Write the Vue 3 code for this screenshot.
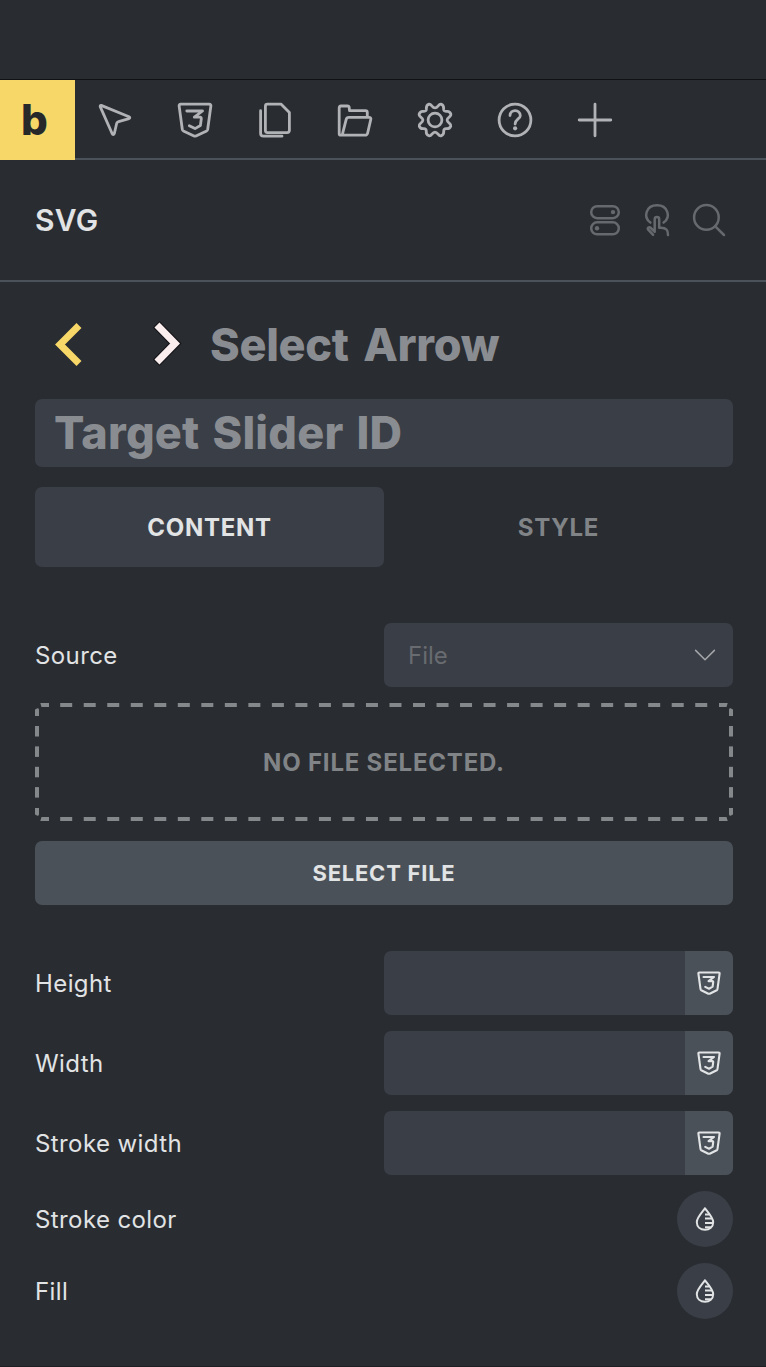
<script setup>
import { ref } from 'vue'

const sizes = ['Height', 'Width', 'Stroke width']
const colors = ['Stroke color', 'Fill']
const tab = ref('Content')
// left edges of the vertical / horizontal dashes around the drop area
const dashX = Array.from({ length: 28 }, (_, i) => 25.2 + i * 23.52)
const dashY = [23, 43.4, 63.8, 84.1]
</script>

<template>
  <div class="panel">
    <div class="topbar"></div>
    <nav class="toolbar">
      <a class="logo"><span>b</span></a>
      <ul class="tools">
        <li>
          <svg viewBox="0 0 36 36"><path d="M4.2 3.4 L32 14.8 Q33.6 15.8 32 16.6 L21.6 19.6 Q20.2 20 19.7 21.3 L17.4 31.3 Q16.2 33.8 15 31.3 L3.2 4.6 Q3 3.2 4.2 3.4Z" /></svg>
        </li>
        <li>
          <svg viewBox="0 0 36 36"><path d="M3.6 2.2H32.4Q34 2.2 33.9 3.8L30.7 27.2Q30.5 28.3 29.6 28.9L19 34Q18 34.4 17 34L6.4 28.9Q5.5 28.3 5.3 27.2L2.1 3.8Q2 2.2 3.6 2.2Z" /><path d="M9.8 9H25.5L17.3 15.2H23Q24.5 15.3 24.3 16.8L23.4 23.5L18 26.6L12.3 23.8" /></svg>
        </li>
        <li>
          <svg viewBox="0 0 36 36"><path d="M10.4 2.2H24.2L32.4 10.5V28.3Q32.4 30.6 30 30.6H10.4Q8.4 30.6 8.4 28.6V4.2Q8.4 2.2 10.4 2.2ZM3.6 8.7V31.2Q3.6 34.2 6.5 34.2H25" /></svg>
        </li>
        <li>
          <svg viewBox="0 0 36 36"><path d="M5.2 33.2H4Q2.2 33.2 2.2 31.4V6Q2.2 4 4 4H10.5Q12 4 12.2 5.4L12.5 8.6H28.5Q30.3 8.6 30.3 10.4V15.4M5.2 33.2L9.2 17.4Q9.7 15.4 11.8 15.4H32Q34.3 15.4 33.8 17.4L30.6 31.2Q30.1 33.2 28 33.2Z" /></svg>
        </li>
        <li>
          <svg viewBox="0 0 36 36"><circle cx="18" cy="18" r="6.9" /><path d="M18 5.9C21 5.9 21.5 1.7 24 2.2C27.5 3.1 26.5 6 26.7 8C27 9.2 27.5 9.4 29 9.4C31 9.4 32.6 8.5 33.8 12C34.7 14.8 30.1 15 30.1 18C30.1 21 34.7 21.4 33.8 24C32.8 27.2 31 26.7 29 26.6C27.3 26.6 26.8 27.3 26.7 29C26.7 31 27.4 32.7 24 33.8C21.4 34.7 21 30.1 18 30.1C15 30.1 14.6 34.7 12 33.8C8.6 32.7 9.3 31 9.3 29C9.2 27.3 8.7 26.6 7 26.6C5 26.7 3.2 27.2 2.2 24C1.3 21.4 5.9 21 5.9 18C5.9 15 1.3 14.8 2.2 12C3.4 8.5 5 9.4 7 9.4C8.5 9.4 9 9.2 9.3 8C9.5 6 8.5 3.1 12 2.2C14.5 1.7 15 5.9 18 5.9Z" /></svg>
        </li>
        <li>
          <svg viewBox="0 0 36 36"><circle cx="18" cy="18" r="15.9" /><path d="M13 13.6C13 6.7 23.5 7.1 23.3 13.7C23.2 16.8 18.1 17.4 18.1 22" /><circle class="dot" cx="18.1" cy="26.3" r="2.1" /></svg>
        </li>
        <li>
          <svg viewBox="0 0 36 36"><path d="M18 2.2V33.8M2.2 18H33.8" /></svg>
        </li>
      </ul>
    </nav>

    <header class="head">
      <h1>SVG</h1>
      <div class="actions">
        <svg viewBox="0 0 32 32"><rect x="2.2" y="2.2" width="27.6" height="12" rx="6" /><rect x="2.2" y="18.3" width="27.6" height="12" rx="6" /><circle class="dot" cx="24" cy="8.1" r="2.2" /><circle class="dot" cx="8" cy="24.2" r="2.2" /></svg>
        <svg viewBox="0 0 32 32"><path d="M9.4 18.6C1.8 13 5 1.2 16 1.2S30.2 13 22.6 18.6" /><path d="M12.1 30.9L7 25.4C6 23.9 8.2 22.4 9.8 24L13.7 27.8V15.2C13.7 12.4 18.2 12.4 18.2 15.2V23.7H20C25.2 23.8 27.1 26 27 31" /></svg>
        <svg viewBox="0 0 32 32"><circle cx="13.4" cy="13.4" r="12.3" /><path d="M22.3 22.3L31 31" /></svg>
      </div>
    </header>

    <main class="body">
      <div class="arrows">
        <svg class="arrow left" viewBox="0 0 30 48"><path d="M26 3.5L7 22.5L26 41.5" /></svg>
        <svg class="arrow right" viewBox="0 0 30 48"><path class="edge" d="M3.2 2.2L22.1 21.5L3.2 40.8" /><path d="M4 3L22.1 21.5L4 40" /></svg>
        <span class="display select">Select Arrow</span>
      </div>
      <div class="target"><span class="display slider">Target Slider ID</span></div>

      <div class="tabs">
        <button v-for="t in ['Content', 'Style']" :key="t" type="button" :class="{ active: tab == t }" @click="tab = t">{{ t }}</button>
      </div>

      <div class="row source">
        <label>Source</label>
        <div class="field dropdown">
          <span>File</span>
          <svg viewBox="0 0 22 14"><path d="M1.6 2.4L11 11.8L20.4 2.4" /></svg>
        </div>
      </div>

      <div class="dropzone">
        <svg class="dashes" viewBox="0 0 698 118">
          <g v-for="y in [0, 114]" :key="y">
            <rect v-for="x in dashX" :key="x" :x="x" :y="y" width="12" height="4" />
          </g>
          <g v-for="x in [0, 694]" :key="'v' + x">
            <rect v-for="y in dashY" :key="y" :x="x" :y="y" width="4" height="10.5" />
          </g>
          <path d="M5.3 0H14V4H6.5ZM0 6.5L3 5L4 6.5V13H0ZM692.7 0H684V4H691.5ZM698 6.5L695 5L694 6.5V13H698ZM5.3 118H14V114H6.5ZM0 111.5L3 113L4 111.5V105H0ZM692.7 118H684V114H691.5ZM698 111.5L695 113L694 111.5V105H698Z" />
        </svg>
        <span>No file selected.</span>
      </div>
      <button type="button" class="file">Select file</button>

      <div v-for="s in sizes" :key="s" class="row size">
        <label>{{ s }}</label>
        <div class="field">
          <i class="unit">
            <svg viewBox="0 0 36 36"><path d="M3.6 2.2H32.4Q34 2.2 33.9 3.8L30.7 27.2Q30.5 28.3 29.6 28.9L19 34Q18 34.4 17 34L6.4 28.9Q5.5 28.3 5.3 27.2L2.1 3.8Q2 2.2 3.6 2.2Z" /><path d="M9.8 9H25.5L17.3 15.2H23Q24.5 15.3 24.3 16.8L23.4 23.5L18 26.6L12.3 23.8" /></svg>
          </i>
        </div>
      </div>

      <div v-for="c in colors" :key="c" class="row color">
        <label>{{ c }}</label>
        <i class="swatch">
          <svg viewBox="0 0 24 24"><path d="M12 1.2C9.5 5 3.8 10.5 3.8 15C3.8 20 7.5 22.8 12 22.8S20.2 20 20.2 15C20.2 10.5 14.5 5 12 1.2Z" /><path d="M12 7.4H16M12 11.6H19M12 16H20M12 20.2H18" /></svg>
        </i>
      </div>
    </main>
  </div>
</template>

<style>
body {
    background: #292c31;
}
</style>

<style scoped>
.panel {
    box-sizing: border-box;
    width: 766px;
    height: 1367px;
    overflow: hidden;
    background: #292c31;
    border-bottom: 1px solid #1d1f23;
    color: #e1e3e4;
    font-family: Inter, sans-serif;
    font-size: 24px;
}

.panel * {
    box-sizing: border-box;
}

svg {
    display: block;
    fill: none;
    stroke: currentColor;
    stroke-linecap: round;
    stroke-linejoin: round;
    overflow: visible;
}

.dot {
    fill: currentColor;
    stroke: none;
}

.topbar {
    height: 80px;
    border-bottom: 1px solid #101113;
}

.toolbar {
    display: flex;
    height: 80px;
}

.logo {
    display: flex;
    align-items: center;
    justify-content: center;
    width: 75px;
    background: #f7d768;
    color: #26282a;
    font: 800 42px/80px Inter, sans-serif;
}

.logo span {
    margin-right: 6px;
}

.tools {
    display: flex;
    flex: 1;
    margin: 0;
    padding: 0;
    border-bottom: 2px solid #4b525a;
    list-style: none;
    color: #b0b2b5;
}

.tools li {
    width: 80px;
    padding: 22px;
}

.tools svg {
    width: 36px;
    height: 36px;
    stroke-width: 2.8;
}

.head {
    display: flex;
    align-items: center;
    justify-content: space-between;
    height: 122px;
    padding: 0 41px 0 35px;
    border-bottom: 2px solid #4b525a;
}

h1 {
    margin: 0;
    font-size: 30px;
    font-weight: 600;
    letter-spacing: 0.3px;
}

.actions {
    display: flex;
    gap: 20px;
    color: #66696d;
}

.actions svg {
    width: 32px;
    height: 32px;
    stroke-width: 2.5;
}

.body {
    padding: 40px 33px 0 35px;
}

.arrows {
    display: flex;
    height: 77px;
    padding-left: 18px;
}

.arrow {
    width: 30px;
    height: 48px;
    stroke-width: 7;
    stroke-linecap: butt;
    stroke-linejoin: miter;
}

.left {
    color: #f7d768;
}

.right {
    margin-left: 70px;
    color: #fbeeee;
}

.edge {
    stroke: #151619;
    stroke-width: 9.4;
}

.display {
    color: #898c91;
    font: 800 45px/48px Inter, sans-serif;
    white-space: nowrap;
}

.select {
    margin-left: 27px;
    line-height: 46px;
    letter-spacing: -0.3px;
    word-spacing: 5px;
}

.target {
    display: flex;
    align-items: center;
    height: 68px;
    padding-left: 19px;
    border-radius: 7px;
    background: #3a3e46;
}

.slider {
    letter-spacing: 0.2px;
    word-spacing: 3px;
}

button {
    padding: 0;
    border: 0;
    border-radius: 7px;
    background: none;
    color: #818487;
    font: 700 24px Inter, sans-serif;
    letter-spacing: 0.75px;
    text-transform: uppercase;
}

.tabs {
    display: flex;
    height: 80px;
    margin: 20px 0 56px;
}

.tabs button {
    flex: 1;
}

.tabs .active {
    background: #3a3e46;
    color: #e1e3e4;
}

.row {
    display: flex;
    align-items: center;
    justify-content: space-between;
    height: 64px;
    margin-bottom: 16px;
}

label {
    letter-spacing: 0.4px;
}

.field {
    display: flex;
    align-items: center;
    justify-content: flex-end;
    width: 349px;
    height: 64px;
    overflow: hidden;
    border-radius: 7px;
    background: #3a3e46;
}

.dropdown {
    justify-content: space-between;
    padding: 0 17px 0 24px;
    color: #686b70;
}

.dropdown svg {
    width: 22px;
    height: 14px;
    color: #a4a6a9;
    stroke-width: 1.5;
}

.dropzone {
    position: relative;
    display: flex;
    align-items: center;
    justify-content: center;
    height: 118px;
    color: #818487;
    font-weight: 700;
    letter-spacing: 0.8px;
    text-transform: uppercase;
}

.dashes {
    position: absolute;
    inset: 0;
    fill: #85888b;
    stroke: none;
}

.file {
    width: 100%;
    height: 64px;
    margin: 20px 0 46px;
    background: #4a5159;
    color: #e1e3e4;
    font-size: 22px;
}

.unit {
    display: flex;
    align-items: center;
    justify-content: center;
    width: 48px;
    height: 64px;
    background: #4a5159;
}

.unit svg {
    width: 24px;
    height: 24px;
    stroke-width: 3.2;
}

.color {
    height: 56px;
}

.swatch {
    display: flex;
    align-items: center;
    justify-content: center;
    width: 56px;
    height: 56px;
    border-radius: 50%;
    background: #3a3e46;
}

.swatch svg {
    width: 24px;
    height: 24px;
    stroke-width: 2;
    stroke-linecap: butt;
}
</style>
